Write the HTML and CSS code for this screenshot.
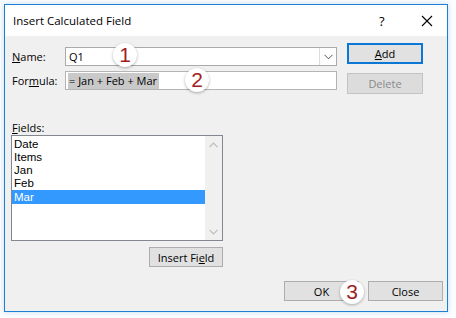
FILE: index.html
```html
<!DOCTYPE html>
<html>
<head>
<meta charset="utf-8">
<link rel="stylesheet" href="styles.css">
</head>
<body>
<div class="window">
  <div class="titlebar">
    <span class="title">Insert Calculated Field</span>
    <span class="help">?</span>
    <svg class="close-x" width="12" height="12" viewBox="0 0 12 12"><path d="M1 1L11 11M11 1L1 11" stroke="#000" stroke-width="1.1" fill="none"/></svg>
  </div>
  <div class="content">
    <div class="top">
      <div class="fields-col">
        <div class="row">
          <span class="label"><u>N</u>ame:</span>
          <div class="input combo"><span class="val">Q1</span><span class="drop"><svg width="9" height="6" viewBox="0 0 9 6"><path d="M0.5 0.8L4.5 4.8L8.5 0.8" stroke="#555" stroke-width="1" fill="none"/></svg></span></div>
        </div>
        <div class="row">
          <span class="label">For<u>m</u>ula:</span>
          <div class="input"><span class="sel">= Jan + Feb + Mar</span></div>
        </div>
      </div>
      <div class="btn-col">
        <div class="btn default"><u>A</u>dd</div>
        <div class="btn disabled">Delete</div>
      </div>
    </div>
    <div class="fields-label"><u>F</u>ields:</div>
    <div class="listbox">
      <div class="items">
        <div class="item">Date</div>
        <div class="item">Items</div>
        <div class="item">Jan</div>
        <div class="item">Feb</div>
        <div class="item selected">Mar</div>
      </div>
      <div class="scroll">
        <svg width="9" height="6" viewBox="0 0 9 6"><path d="M0.5 5.2L4.5 1.2L8.5 5.2" stroke="#bdbdbd" stroke-width="1.2" fill="none"/></svg>
        <svg width="9" height="6" viewBox="0 0 9 6"><path d="M0.5 0.8L4.5 4.8L8.5 0.8" stroke="#bdbdbd" stroke-width="1.2" fill="none"/></svg>
      </div>
    </div>
    <div class="insert-row">
      <div class="btn insert">Insert Fi<u>e</u>ld</div>
    </div>
    <div class="bottom">
      <div class="btn">OK</div>
      <div class="btn">Close</div>
    </div>
  </div>
  <div class="badge b1">1</div>
  <div class="badge b2">2</div>
  <div class="badge b3">3</div>
</div>
</body>
</html>
```
FILE: styles.css
```css
* { box-sizing: border-box; }
html, body { margin: 0; padding: 0; }
body {
  background: #fbfdff;
  font-family: "Open Sans", "Noto Sans", "Liberation Sans", sans-serif;
  font-size: 11px;
  color: #000;
  width: 456px;
  height: 318px;
  overflow: hidden;
}
.window {
  position: relative;
  margin: 4px 0 0 4px;
  width: 444px;
  height: 308px;
  border: 1px solid #1c7fd3;
  background: #f0f0f0;
  box-shadow: 0 0 5px rgba(40, 110, 190, 0.25);
  display: flex;
  flex-direction: column;
}
.titlebar {
  height: 31px;
  background: #fff;
  display: flex;
  align-items: center;
  padding-left: 8px;
  flex: none;
}
.title { font-size: 11.5px; color: #000; flex: 1; }
.help { font-size: 13px; width: 10px; margin-right: 32px; }
.close-x { margin-right: 14px; }
.content {
  flex: 1;
  display: flex;
  flex-direction: column;
  padding: 7px 4px 0 7px;
}
.top { display: flex; }
.fields-col {
  display: flex;
  flex-direction: column;
  gap: 5px;
  margin-top: 4px;
}
.row { display: flex; align-items: center; }
.label { width: 53px; }
.input {
  width: 272px;
  height: 19px;
  background: #fff;
  border: 1px solid #b4b4b4;
  display: flex;
  align-items: center;
  padding-left: 2px;
}
.combo { border-color: #aaaaaa; }
.combo .val { flex: 1; padding-left: 1px; }
.drop {
  width: 17px;
  height: 17px;
  border-left: 1px solid #dcdcdc;
  display: flex;
  align-items: center;
  justify-content: center;
}
.sel { background: #c9c9c9; padding: 0 2px 1px 1px; line-height: 15px; }
.btn-col {
  display: flex;
  flex-direction: column;
  gap: 9px;
  margin-left: 10px;
}
.btn {
  width: 76px;
  height: 21px;
  background: #e1e1e1;
  border: 1px solid #adadad;
  display: flex;
  align-items: center;
  justify-content: center;
}
.btn.default { border: 2px solid #0a78d4; }
.btn.disabled { background: #dcdcdc; border-color: #c3c3c3; color: #8a8a8a; }
.fields-label { margin-top: 27px; height: 14px; line-height: 14px; }
.listbox {
  margin-left: -1px;
  width: 212px;
  height: 106px;
  border: 1px solid #828790;
  background: #fff;
  display: flex;
}
.items { flex: 1; padding-top: 2px; }
.item {
  height: 13px;
  line-height: 13px;
  padding-left: 2px;
  font-family: "Liberation Sans", Arial, sans-serif;
  font-size: 11.5px;
  overflow: hidden;
}
.item.selected { background: #3399ff; color: #fff; height: 14px; line-height: 14px; }
.scroll {
  width: 17px;
  background: #f0f0f0;
  display: flex;
  flex-direction: column;
  justify-content: space-between;
  align-items: center;
  padding: 6px 0 5px;
}
.insert-row { display: flex; width: 211px; justify-content: flex-end; margin-top: 6px; }
.btn.insert { width: 74px; height: 20px; }
.bottom {
  display: flex;
  justify-content: flex-end;
  gap: 9px;
  margin-top: 14px;
}
.bottom .btn { width: 75px; height: 20px; }
.badge {
  position: absolute;
  width: 24px;
  height: 24px;
  border-radius: 50%;
  background: #fff;
  box-shadow: 0 1px 3px rgba(0,0,0,0.3);
  color: #a21d24;
  font-family: "Liberation Sans", Arial, sans-serif;
  font-size: 21px;
  line-height: 24px;
  text-align: center;
}
.b1 { left: 108px; top: 38px; }
.b2 { left: 180px; top: 63px; }
.b3 { left: 335px; top: 275px; }
```
